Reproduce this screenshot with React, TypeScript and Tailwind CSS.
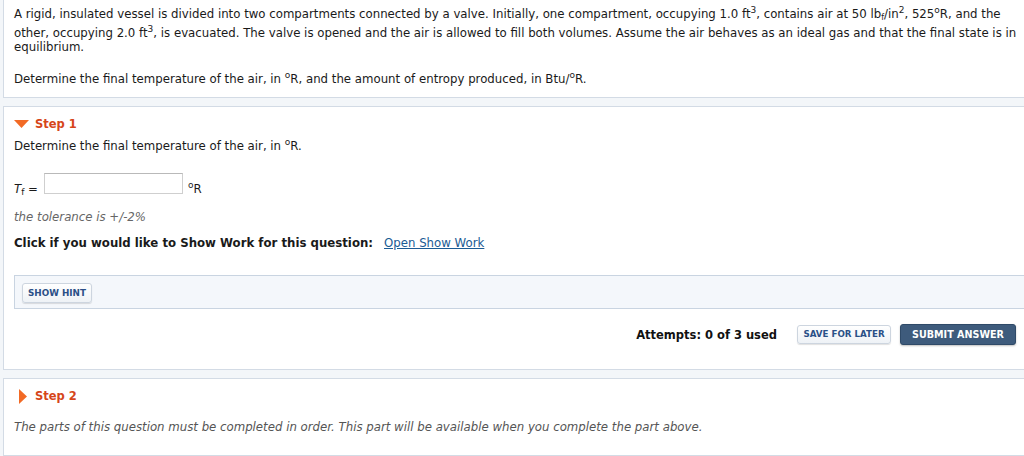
import React from "react";

const Sup = ({ children }: { children: React.ReactNode }) => (
  <sup className="text-[9px] -top-[5px]">{children}</sup>
);

const Deg = () => <sup className="text-[9px] -top-[5px]">o</sup>;

export default function App() {
  return (
    <div className="w-[1024px] h-[456px] overflow-hidden bg-[#f3f6f9] font-['DejaVu_Sans',Verdana,sans-serif] text-[11.75px] text-[#1a1a1a]">
      {/* Question panel */}
      <div className="ml-[3px] w-[1040px] h-[98px] bg-white border-l border-b border-[#d3dbe5] pl-[10px] pt-[7px] whitespace-nowrap">
        <div className="h-[15px] leading-[15px]">
          A rigid, insulated vessel is divided into two compartments connected by a valve. Initially, one compartment, occupying 1.0 ft<Sup>3</Sup>, contains air at 50 lb<sub className="text-[8px]">f</sub>/in<Sup>2</Sup>, 525<Deg />R, and the
        </div>
        <div className="mt-[4px] h-[15px] leading-[15px]">
          other, occupying 2.0 ft<Sup>3</Sup>, is evacuated. The valve is opened and the air is allowed to fill both volumes. Assume the air behaves as an ideal gas and that the final state is in
        </div>
        <div className="-mt-[1px] h-[15px] leading-[15px]">equilibrium.</div>
        <div className="mt-[17px] h-[15px] leading-[15px]">
          Determine the final temperature of the air, in <Deg />R, and the amount of entropy produced, in Btu/<Deg />R.
        </div>
      </div>

      {/* Step 1 panel */}
      <div className="mt-[8px] ml-[3px] w-[1040px] h-[264px] bg-white border-l border-t border-b border-[#d3dbe5] pl-[10px] pt-[9px]">
        <div className="flex items-center h-[16px] leading-[16px] text-[11.5px]">
          <svg width="15" height="8" viewBox="0 0 15 8" className="mr-[6px]">
            <polygon points="0,0 15,0 7.5,8" fill="#f26a25" />
          </svg>
          <span className="font-bold text-[#d6461a]">Step 1</span>
        </div>
        <div className="mt-[6px] h-[16px] leading-[16px]">
          Determine the final temperature of the air, in <Deg />R.
        </div>
        <div className="mt-[19px] flex items-start h-[21px]">
          <span className="w-[30px] pt-[8px] leading-[16px]">
            <span className="italic">T</span>
            <sub className="text-[9px]">f</sub> =
          </span>
          <div className="w-[139px] h-[21px] border border-[#cfcfcf] border-t-[#b9b9b9] bg-white" />
          <span className="ml-[5px] pt-[8px] leading-[16px]">
            <Deg />R
          </span>
        </div>
        <div className="mt-[15px] h-[16px] leading-[16px] italic text-[#666]">the tolerance is +/-2%</div>
        <div className="mt-[10px] h-[16px] leading-[16px] flex">
          <span className="font-bold">Click if you would like to Show Work for this question:</span>
          <a className="ml-[11px] text-[#1b5b94] underline">Open Show Work</a>
        </div>
        <div className="mt-[24px] w-[1030px] h-[34px] border border-[#c9d4e1] bg-[#f4f7fb] pl-[7px] pt-[7px]">
          <button className="w-[70px] h-[20px] rounded-[3px] border border-[#cdd5df] bg-gradient-to-b from-white to-[#eef2f6] shadow-[0_1px_1px_rgba(0,0,0,0.12)] text-[8.8px] font-bold text-[#2b5087] leading-none">
            SHOW HINT
          </button>
        </div>
        <div className="mt-[15px] w-[1002px] h-[21px] flex items-center justify-end text-[11.5px]">
          <span className="font-bold text-[#111] pt-[2px]">Attempts: 0 of 3 used</span>
          <button className="ml-[20px] w-[94px] h-[19px] rounded-[3px] border border-[#cdd5df] bg-gradient-to-b from-white to-[#eef2f6] shadow-[0_1px_1px_rgba(0,0,0,0.12)] text-[8.7px] font-bold text-[#2b5087] leading-none">
            SAVE FOR LATER
          </button>
          <button className="ml-[9px] w-[116px] h-[21px] rounded-[3px] border border-[#2f4a68] bg-[#3e5b7c] shadow-[0_1px_2px_rgba(0,0,0,0.25)] text-[9.6px] font-bold text-white leading-none">
            SUBMIT ANSWER
          </button>
        </div>
      </div>

      {/* Step 2 panel */}
      <div className="mt-[8px] ml-[3px] w-[1040px] h-[78px] bg-white border-l border-t border-b border-[#d3dbe5] pl-[10px] pt-[9px]">
        <div className="flex items-center h-[16px] leading-[16px] text-[11.5px]">
          <svg width="8" height="15" viewBox="0 0 8 15" className="ml-[5px] mr-[8px]">
            <polygon points="0,0 8,7.5 0,15" fill="#f26a25" />
          </svg>
          <span className="font-bold text-[#d6461a]">Step 2</span>
        </div>
        <div className="mt-[15px] h-[16px] leading-[16px] italic text-[#555]">
          The parts of this question must be completed in order. This part will be available when you complete the part above.
        </div>
      </div>
    </div>
  );
}
